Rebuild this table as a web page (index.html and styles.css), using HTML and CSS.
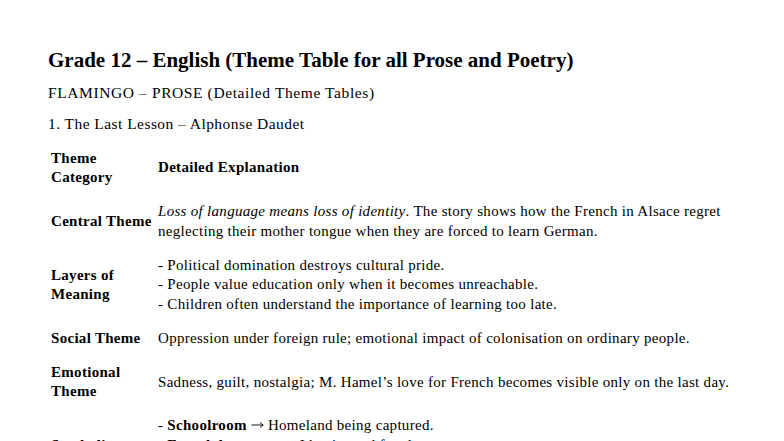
FILE: index.html
```html
<!DOCTYPE html>
<html lang="en">
<head>
<meta charset="utf-8">
<title>Grade 12 – English Theme Table</title>
<link rel="stylesheet" href="styles.css">
</head>
<body>
<main class="page">
  <h1 class="title">Grade 12 – English (Theme Table for all Prose and Poetry)</h1>
  <h2 class="section">FLAMINGO – PROSE (Detailed Theme Tables)</h2>
  <h3 class="chapter">1. The Last Lesson – Alphonse Daudet</h3>
  <table class="themes">
    <thead>
      <tr>
        <th class="cat">Theme<br>Category</th>
        <th class="exp">Detailed Explanation</th>
      </tr>
    </thead>
    <tbody>
      <tr>
        <th class="cat">Central Theme</th>
        <td><em>Loss of language means loss of identity</em>. The story shows how the French in Alsace regret<br>neglecting their mother tongue when they are forced to learn German.</td>
      </tr>
      <tr>
        <th class="cat">Layers of<br>Meaning</th>
        <td>- Political domination destroys cultural pride.<br>- People value education only when it becomes unreachable.<br>- Children often understand the importance of learning too late.</td>
      </tr>
      <tr>
        <th class="cat">Social Theme</th>
        <td>Oppression under foreign rule; emotional impact of colonisation on ordinary people.</td>
      </tr>
      <tr>
        <th class="cat">Emotional<br>Theme</th>
        <td>Sadness, guilt, nostalgia; M. Hamel’s love for French becomes visible only on the last day.</td>
      </tr>
      <tr>
        <th class="cat">Symbolism</th>
        <td>- <strong>Schoolroom</strong> <svg class="arrow" viewBox="0 0 13 8" aria-label="→"><path d="M0.5 4H12M9 1.5L12.2 4L9 6.5" fill="none" stroke="#000" stroke-width="0.9"/></svg> Homeland being captured.<br>- <strong>French language</strong> <svg class="arrow" viewBox="0 0 13 8" aria-label="→"><path d="M0.5 4H12M9 1.5L12.2 4L9 6.5" fill="none" stroke="#000" stroke-width="0.9"/></svg> Identity and freedom.<br>- <strong>Pigeons</strong> <svg class="arrow" viewBox="0 0 13 8" aria-label="→"><path d="M0.5 4H12M9 1.5L12.2 4L9 6.5" fill="none" stroke="#000" stroke-width="0.9"/></svg> Even nature cannot be forced to change its language.</td>
      </tr>
    </tbody>
  </table>
</main>
</body>
</html>
```
FILE: styles.css
```css
html, body {
  margin: 0;
  padding: 0;
  background: #ffffff;
}
body {
  font-family: "Liberation Serif", "Times New Roman", serif;
  color: #000000;
}
.page {
  padding: 46px 0 0 48px;
}
.title {
  margin: 0;
  font-size: 21px;
  font-weight: bold;
  line-height: 28px;
}
.section {
  margin: 9px 0 0 0;
  font-size: 15.5px;
  font-weight: normal;
  line-height: 20px;
  letter-spacing: 0.6px;
}
.chapter {
  margin: 11px 0 0 0;
  font-size: 15.5px;
  font-weight: normal;
  line-height: 20px;
  letter-spacing: 0.45px;
}
.themes {
  margin-top: 7.4px;
  border-collapse: collapse;
  font-size: 15px;
  line-height: 19.6px;
  letter-spacing: 0.3px;
}
.themes th,
.themes td {
  padding: 7.2px 2px 7.2px 3px;
  vertical-align: middle;
  text-align: left;
}
.themes th {
  font-weight: bold;
  letter-spacing: 0.3px;
}
.themes td {
  padding-left: 4px;
}
.themes .cat {
  width: 101px;
  white-space: nowrap;
}
.themes .exp {
  padding-left: 4px;
}
.themes strong {
  font-weight: bold;
}
.arrow {
  width: 13px;
  height: 8px;
  vertical-align: 1px;
}
```
